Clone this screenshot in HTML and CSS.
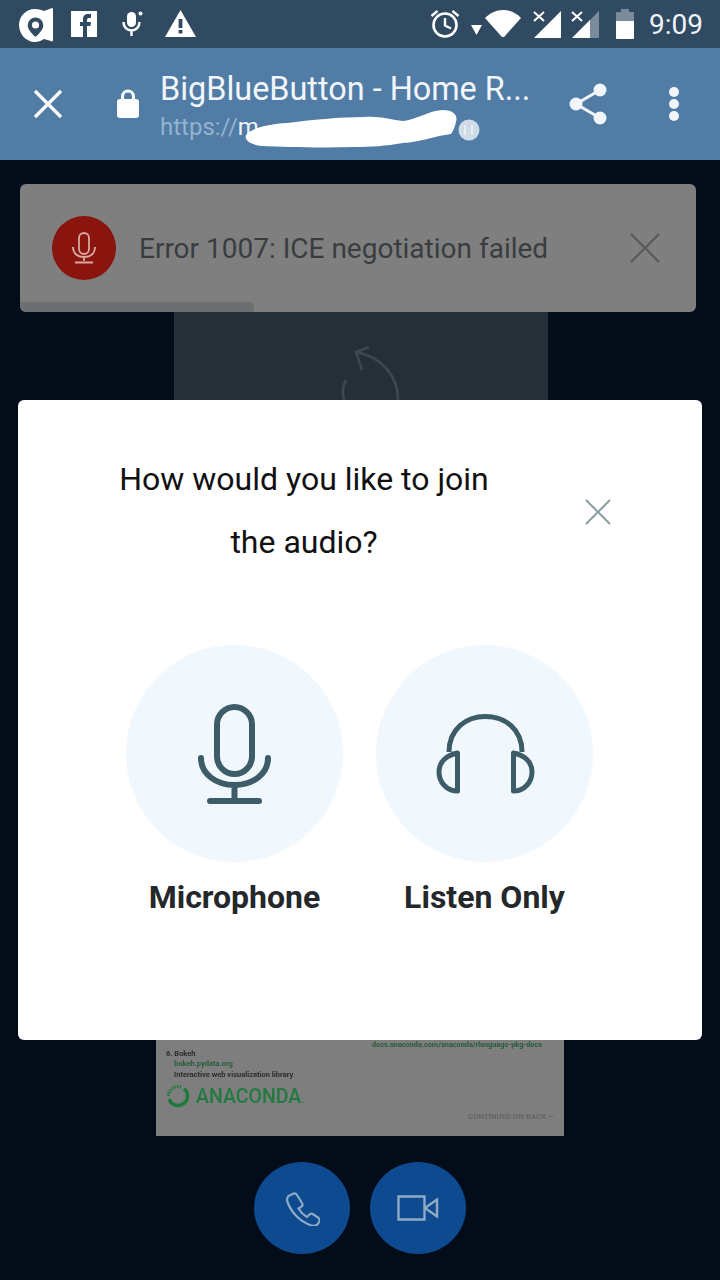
FILE: index.html
```html
<!DOCTYPE html>
<html>
    <head>
        <title>BigBlueButton - Home Room</title>
        <link rel="stylesheet" href="styles.css">
    </head>
    <body>
        <div class="status-bar">
            <svg class="st-app" width="36" height="35" viewBox="0 0 36 35">
                <path fill="#fff" d="M17 2c4 0 7 1 9 2l8-3c1 0 1 1 1 2v30c0 1-1 2-2 1l-7-2c-3 2-6 3-9 3C8 35 1 27 1 18S8 2 17 2z"/>
                <path fill="#304a62" d="M17.5 10.5a7.8 7.8 0 0 1 7.8 7.8c0 4.5-4.3 8.5-7.8 11.7-3.5-3.2-7.8-7.2-7.8-11.7a7.8 7.8 0 0 1 7.8-7.8z"/>
                <circle fill="#fff" cx="17.5" cy="18" r="3.6"/>
            </svg>
            <svg class="st-fb" width="26" height="28" viewBox="0 0 26 28">
                <path fill="#fff" d="M0 0h26v26H0z"/>
                <path fill="#304a62" d="M12 28V15H9v-4h3V8c0-3 2-5 5-5h3v4h-2c-1 0-2 .5-2 2v2h4l-.6 4H16v13z"/>
            </svg>
            <svg class="st-mic" width="22" height="26" viewBox="0 0 22 26">
                <rect fill="#fff" x="5" y="1" width="9" height="15" rx="4.5"/>
                <path fill="none" stroke="#fff" stroke-width="2.4" d="M1.5 11c0 5 3.5 8.500 8 8.500s8-3.500 8-8.500M9.500 19v6"/>
                <circle fill="#fff" cx="18.5" cy="2.5" r="2"/>
            </svg>
            <svg class="st-warn" width="31" height="28" viewBox="0 0 31 28">
                <path fill="#fff" d="M15.5 0L31 27H0z"/>
                <path fill="#304a62" d="M13.6 9h3.8v9h-3.8zM13.6 20h3.8v3.6h-3.8z"/>
            </svg>
            <div class="status-spacer"></div>
            <svg class="st-alarm" width="30" height="30" viewBox="0 0 30 30">
                <circle fill="none" stroke="#fff" stroke-width="2.6" cx="15" cy="16" r="11.5"/>
                <path fill="none" stroke="#fff" stroke-width="2.4" d="M15 9v7.500l6 3M1.500 7l6-5M28.500 7l-6-5"/>
            </svg>
            <svg class="st-tri" width="11" height="10" viewBox="0 0 11 10">
                <path fill="#fff" d="M0 0h11L5.5 10z"/>
            </svg>
            <svg class="st-wifi" width="36" height="28" viewBox="0 0 36 28">
                <path fill="#fff" d="M0 8C5 3 11 0 18 0s13 3 18 8L19.5 26.5c-.8.8-2.2.8-3 0z"/>
            </svg>
            <svg class="st-signal" width="29" height="28" viewBox="0 0 29 28">
                <path fill="#fff" d="M28 1v27H1z"/>
                <path fill="none" stroke="#fff" stroke-width="2" d="M1 2l10 9M11 2L1 11"/>
            </svg>
            <svg class="st-signal-2" width="29" height="28" viewBox="0 0 29 28">
                <path fill="#7b8c9e" d="M28 1v27H1z"/>
                <path fill="#fff" d="M19 10v18H1z"/>
                <path fill="none" stroke="#fff" stroke-width="2" d="M1 2l10 9M11 2L1 11"/>
            </svg>
            <svg class="st-battery" width="18" height="30" viewBox="0 0 18 30">
                <path fill="#7c8b9b" d="M5 0h8v3h4c.6 0 1 .4 1 1v9H0V4c0-.6.4-1 1-1h4z"/>
                <path fill="#fff" d="M0 12h18v17c0 .6-.4 1-1 1H1c-.6 0-1-.4-1-1z"/>
            </svg>
            <div class="status-time">9:09</div>
        </div>

        <div class="browser-bar">
            <svg class="bar-close" width="30" height="30" viewBox="0 0 30 30">
                <path fill="none" stroke="#fff" stroke-width="3.2" d="M2 2l26 26M28 2L2 28"/>
            </svg>
            <svg class="bar-lock" width="22" height="30" viewBox="0 0 22 30">
                <path fill="none" stroke="#fff" stroke-width="3" d="M5.5 11V7.500a5.500 5.500 0 0 1 11 0V11"/>
                <rect fill="#fff" x="0" y="10" width="22" height="19" rx="3"/>
            </svg>
            <div class="bar-text">
                <div class="bar-title">BigBlueButton - Home R...</div>
                <div class="bar-url">https://<span class="bar-url-host">m</span></div>
            </div>
            <svg class="bar-share" width="38" height="42" viewBox="0 0 38 42">
                <path fill="none" stroke="#f2f6fa" stroke-width="3" d="M31 7L7 21l24 14"/>
                <circle fill="#f2f6fa" cx="31" cy="7" r="6.5"/>
                <circle fill="#f2f6fa" cx="7" cy="21" r="6.5"/>
                <circle fill="#f2f6fa" cx="31" cy="35" r="6.5"/>
            </svg>
            <div class="bar-dots">
                <span></span>
                <span></span>
                <span></span>
            </div>
            <svg class="bar-scribble" width="720" height="112" viewBox="0 48 720 112">
                <path fill="#fff" d="M246 135C252 128 268 124 287 123C310 120 340 117 365 117C380 116 392 120 403 121C416 120 430 110 443 110C454 110 458 116 456 122C455 127 453 131 451 134C435 136 420 142 403 143C385 146 372 147 355 147C320 148 285 147 262 146C252 145 244 141 246 135Z"/>
                <circle fill="#cfdbe7" cx="469" cy="130" r="10.5"/>
                <path fill="none" stroke="#e8eef4" stroke-width="2" d="M465 125v10M472 125v10"/>
            </svg>
        </div>

        <div class="stage">
            <div class="toast">
                <div class="toast-badge">
                    <svg width="26" height="32" viewBox="0 0 26 32">
                        <rect fill="none" stroke="#d9a89f" stroke-width="1.8" x="8" y="1" width="10" height="21" rx="5"/>
                        <path fill="none" stroke="#d9a89f" stroke-width="1.8" d="M2 15c0 6 4 10 11 10s11-4 11-10M13 25v4M4 30.500h18"/>
                    </svg>
                </div>
                <div class="toast-text">Error 1007: ICE negotiation failed</div>
                <svg class="toast-close" width="30" height="30" viewBox="0 0 30 30">
                    <path fill="none" stroke="#555859" stroke-width="2" d="M1 1l28 28M29 1L1 29"/>
                </svg>
                <div class="toast-progress"></div>
            </div>

            <div class="slide-top">
                <svg width="374" height="88" viewBox="174 312 374 88">
                    <path fill="none" stroke="#3c4852" stroke-width="2.5" d="M369 347l-13 5 6 18M356 352c26 5 42 24 42 48M344 400c-2-8-1-15 2-20"/>
                </svg>
            </div>

            <div class="modal">
                <div class="modal-head">
                    <div class="modal-title">How would you like to join<br>the audio?</div>
                    <svg class="modal-close" width="26" height="26" viewBox="0 0 26 26">
                        <path fill="none" stroke="#8a9ca6" stroke-width="2" d="M1 1l24 24M25 1L1 25"/>
                    </svg>
                </div>
                <div class="choices">
                    <div class="choice">
                        <div class="choice-circle">
                            <svg width="217" height="217" viewBox="0 0 217 217">
                                <g fill="none" stroke="#3d5c68" stroke-width="6" stroke-linecap="round">
                                    <rect x="91" y="62" width="35" height="67" rx="17.5"/>
                                    <path d="M75 113c0 16 15 27 33.500 27s33.500-11 33.500-27M108.500 140v16M84 156h49"/>
                                </g>
                            </svg>
                        </div>
                        <div class="choice-label">Microphone</div>
                    </div>
                    <div class="choice">
                        <div class="choice-circle">
                            <svg width="217" height="217" viewBox="0 0 217 217">
                                <g fill="none" stroke="#3d5c68" stroke-width="5" stroke-linejoin="round">
                                    <path d="M73 107C73 84 90 71.500 109.500 71.500S146 84 146 107"/>
                                    <path d="M81.500 108v38c-11 0-18.500-9-18.500-19s7.500-17 18.500-19z"/>
                                    <path d="M137.500 108v38c11 0 18.500-9 18.500-19s-7.500-17-18.500-19z"/>
                                </g>
                            </svg>
                        </div>
                        <div class="choice-label">Listen Only</div>
                    </div>
                </div>
            </div>

            <div class="slide-bottom">
                <div class="slide-left">
                    <div class="slide-line slide-clipped">Statistical graphics library for Python</div>
                    <div class="slide-line slide-heading">6. Bokeh</div>
                    <div class="slide-line slide-link slide-indent">bokeh.pydata.org</div>
                    <div class="slide-line slide-indent">Interactive web visualization library</div>
                    <div class="slide-logo">
                        <svg width="24" height="24" viewBox="0 0 24 24">
                            <path fill="none" stroke="#1f7a3a" stroke-width="3.5" d="M18 4.600A9.500 9.500 0 1 1 3 15"/>
                            <path fill="none" stroke="#1f7a3a" stroke-width="3" stroke-dasharray="1.500 1.200" d="M2.500 12A9.500 9.500 0 0 1 16 3.400"/>
                        </svg>
                        <span>ANACONDA<small>.</small></span>
                    </div>
                </div>
                <div class="slide-right">
                    <div class="slide-line slide-link">docs.anaconda.com/anaconda/rlanguage-pkg-docs</div>
                    <div class="slide-more">CONTINUED ON BACK &mdash;</div>
                </div>
            </div>

            <div class="call-buttons">
                <div class="call-btn">
                    <svg width="36" height="36" viewBox="-1.5 -2 36 36">
                        <path fill="none" stroke="#8fa9c6" stroke-width="2.2" d="M3 4L8 1.500C9.500 1 10.500 1.500 11.500 3L16.500 11C17.500 12.500 17 14 15.500 15L13 16.500C15 20 18 23 21.500 25L24 22.500C25 21.500 26.500 21.500 28 22.500L32.500 25.500C34 26.500 34.500 28.500 33.500 30C32 33 29 34.500 26 33.500C15 30 6 21 2 10C1.200 7.500 1.500 5.500 3 4Z"/>
                    </svg>
                </div>
                <div class="call-btn">
                    <svg width="42" height="26" viewBox="0 0 42 26">
                        <path fill="none" stroke="#8fa9c6" stroke-width="2.4" d="M1.500 1.500h26v23h-26zM28 13l12-8.500v17z"/>
                    </svg>
                </div>
            </div>
        </div>
    </body>
</html>
```

FILE: styles.css
```css
* {
    box-sizing: border-box;
}
body {
    margin: 0;
    width: 720px;
    height: 1280px;
    overflow: hidden;
    background: #020d19;
    font-family: Roboto, sans-serif;
}
svg {
    display: block;
    flex: none;
}

/* status bar */
.status-bar {
    height: 48px;
    background: #304a62;
    display: flex;
    align-items: center;
    padding-left: 18px;
}
.st-fb {
    margin-left: 17px;
    margin-top: 2px;
}
.st-mic {
    margin-left: 25px;
}
.st-warn {
    margin-left: 21px;
}
.status-spacer {
    flex: 1;
}
.st-tri {
    margin-left: 11px;
    margin-top: 12px;
}
.st-wifi {
    margin-left: 3px;
}
.st-signal {
    margin-left: 12px;
}
.st-signal-2 {
    margin-left: 9px;
}
.st-battery {
    margin-left: 16px;
}
.status-time {
    margin-left: 15px;
    margin-right: 17px;
    color: #eef3f7;
    font-size: 28px;
}

/* browser bar */
.browser-bar {
    position: relative;
    height: 112px;
    background: #507ca5;
    display: flex;
    align-items: center;
    padding-left: 33px;
}
.bar-lock {
    margin-left: 54px;
}
.bar-text {
    align-self: flex-start;
    margin-left: 21px;
    padding-top: 21px;
    width: 391px;
    white-space: nowrap;
}
.bar-title {
    color: #f2f6fa;
    font-size: 32.4px;
    line-height: 40px;
}
.bar-url {
    margin-top: 2px;
    color: #95b3d0;
    font-size: 24px;
    line-height: 32px;
}
.bar-url-host {
    color: #f2f6fa;
}
.bar-share {
    margin-left: 18px;
}
.bar-dots {
    margin-left: 62px;
    display: flex;
    flex-direction: column;
    gap: 2px;
}
.bar-dots span {
    width: 10px;
    height: 10px;
    border-radius: 50%;
    background: #f2f6fa;
}
.bar-scribble {
    position: absolute;
    top: 0;
    left: 0;
}

/* stage behind the dialog */
.stage {
    position: relative;
    height: 1120px;
    display: flex;
    flex-direction: column;
    align-items: center;
}
.toast {
    position: absolute;
    top: 24px;
    left: 20px;
    width: 676px;
    height: 128px;
    padding-left: 32px;
    background: #7f7f7f;
    border-radius: 6px;
    overflow: hidden;
    display: flex;
    align-items: center;
}
.toast-badge {
    width: 64px;
    height: 64px;
    border-radius: 50%;
    background: #8a150f;
    display: flex;
    align-items: center;
    justify-content: center;
}
.toast-text {
    margin-left: 23px;
    width: 491px;
    color: #3a3d40;
    font-size: 28px;
    white-space: nowrap;
}
.toast-progress {
    position: absolute;
    left: 0;
    bottom: 0;
    width: 234px;
    height: 10px;
    background: #6b6f70;
    border-radius: 0 5px 0 0;
}
.slide-top {
    margin-top: 152px;
    margin-left: 2px;
    width: 374px;
    height: 88px;
    background: #262f38;
}

/* audio dialog */
.modal {
    width: 684px;
    height: 640px;
    background: #fff;
    border-radius: 6px;
}
.modal-head {
    display: flex;
    padding-top: 48px;
}
.modal-title {
    width: 572px;
    text-align: center;
    color: #111;
    font-size: 32px;
    line-height: 63px;
}
.modal-close {
    margin-left: -5px;
    margin-top: 51px;
}
.choices {
    display: flex;
    gap: 33px;
    padding-left: 108px;
    margin-top: 71px;
}
.choice {
    width: 217px;
    display: flex;
    flex-direction: column;
    align-items: center;
}
.choice-circle {
    width: 217px;
    height: 217px;
    border-radius: 50%;
    background: #f0f8fe;
}
.choice-label {
    margin-top: 16px;
    color: #25282b;
    font-size: 32px;
    font-weight: 700;
    line-height: 38px;
    white-space: nowrap;
}

/* lower slide */
.slide-bottom {
    width: 408px;
    height: 96px;
    padding: 0 10px 0 10px;
    background: #7e7e7e;
    overflow: hidden;
    display: flex;
    justify-content: space-between;
    filter: blur(0.6px);
    color: #2a2c2e;
    font-size: 7.5px;
    font-weight: 700;
}
.slide-line {
    line-height: 10.5px;
    white-space: nowrap;
}
.slide-clipped {
    margin-top: -9px;
    margin-left: 8px;
    margin-bottom: 7px;
}
.slide-indent {
    margin-left: 8px;
}
.slide-link {
    color: #275c3d;
}
.slide-logo {
    display: flex;
    align-items: center;
    gap: 6px;
    margin-top: 4px;
    color: #217a3f;
    font-size: 19.5px;
    font-weight: 500;
}
.slide-logo small {
    font-size: 10px;
}
.slide-right {
    width: 182px;
    text-align: right;
}
.slide-right .slide-link {
    font-size: 7.3px;
    margin-right: 12px;
}
.slide-more {
    margin-top: 61px;
    color: #666;
    font-size: 7.8px;
}

/* call controls */
.call-buttons {
    display: flex;
    gap: 20px;
    margin-top: 26px;
}
.call-btn {
    width: 96px;
    height: 92px;
    border-radius: 50%;
    background: #0d4a8f;
    display: flex;
    align-items: center;
    justify-content: center;
}
```
